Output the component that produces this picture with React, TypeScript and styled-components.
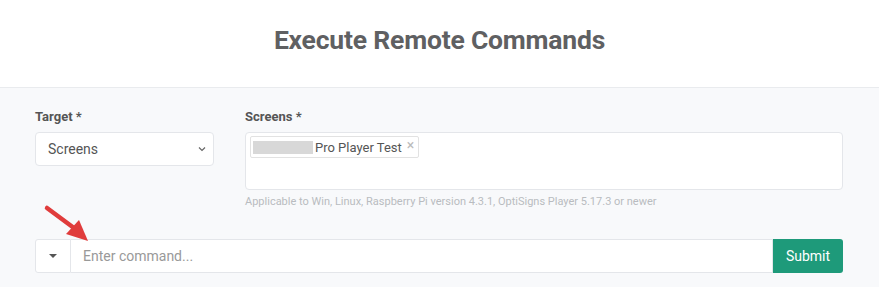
import React from "react";
import styled, { createGlobalStyle } from "styled-components";

const GlobalStyle = createGlobalStyle`
  html, body {
    margin: 0;
    padding: 0;
    background: #f8f9fb;
    font-family: Roboto, "Liberation Sans", Arial, sans-serif;
    overflow: hidden;
  }
  * { box-sizing: border-box; }
`;

const Header = styled.header`
  height: 88px;
  background: #fff;
  border-bottom: 1px solid #e9ebee;
  display: flex;
  align-items: center;
  justify-content: center;
`;

const Title = styled.h1`
  margin: 0 0 8px 0;
  font-size: 26.5px;
  font-weight: 700;
  color: #5f6062;
  letter-spacing: -0.2px;
`;

const Body = styled.main`
  padding: 21px 36px 0 35px;
  position: relative;
`;

const Row = styled.div`
  display: flex;
  gap: 31px;
`;

const Field = styled.div<{ $width?: number }>`
  display: flex;
  flex-direction: column;
  width: ${(p) => (p.$width ? `${p.$width}px` : "auto")};
  flex: ${(p) => (p.$width ? "none" : "1")};
`;

const Label = styled.label`
  font-size: 13px;
  font-weight: 700;
  color: #555;
  margin-bottom: 7px;
  line-height: 16px;
`;

const SelectBox = styled.div`
  height: 34px;
  background: #fff;
  border: 1px solid #e4e6ea;
  border-radius: 4px;
  display: flex;
  align-items: center;
  justify-content: space-between;
  padding: 0 6px 0 12px;
  font-size: 14px;
  color: #555;
`;

const MultiBox = styled.div`
  height: 58px;
  background: #fff;
  border: 1px solid #e4e6ea;
  border-radius: 4px;
  padding: 3px 4px;
`;

const Chip = styled.span`
  display: inline-flex;
  align-items: center;
  height: 22px;
  border: 1px solid #e2e2e2;
  border-radius: 2px;
  padding: 0 4px 0 2px;
  font-size: 13px;
  color: #555;
  background: #fff;
`;

const Redacted = styled.span`
  display: inline-block;
  width: 60px;
  height: 13px;
  background: #d8d8d8;
  margin-right: 2px;
`;

const ChipClose = styled.span`
  color: #bbb;
  font-size: 14px;
  margin-left: 5px;
  line-height: 1;
  margin-top: -4px;
`;

const Help = styled.div`
  margin-top: 5px;
  font-size: 11px;
  color: #b9bcc0;
`;

const CommandRow = styled.div`
  margin-top: 31px;
  display: flex;
  height: 34px;
`;

const DropButton = styled.button`
  width: 36px;
  background: #fff;
  border: 1px solid #e4e6ea;
  border-radius: 3px 0 0 3px;
  display: flex;
  align-items: center;
  justify-content: center;
  padding: 0;
`;

const Caret = styled.span`
  width: 0;
  height: 0;
  border-left: 4px solid transparent;
  border-right: 4px solid transparent;
  border-top: 4px solid #555;
`;

const CommandInput = styled.input`
  flex: 1;
  border: 1px solid #e4e6ea;
  border-left: none;
  background: #fff;
  padding: 0 12px;
  font-size: 14px;
  font-family: inherit;
  color: #555;
  outline: none;
  &::placeholder { color: #999; }
`;

const SubmitButton = styled.button`
  width: 70px;
  background: #1e9a7a;
  color: #fff;
  border: none;
  border-radius: 0 3px 3px 0;
  font-family: inherit;
  font-size: 14px;
`;

// red annotation arrow drawn over the form
const Arrow = styled.svg`
  position: absolute;
  left: 42px;
  top: 116px;
  overflow: visible;
`;

export default function App() {
  return (
    <>
      <GlobalStyle />
      <Header>
        <Title>Execute Remote Commands</Title>
      </Header>
      <Body>
        <Row>
          <Field $width={179}>
            <Label>Target *</Label>
            <SelectBox>
              Screens
              <svg width="10" height="10" viewBox="0 0 10 10">
                <path d="M2 3.5 L5 6.5 L8 3.5" fill="none" stroke="#666" strokeWidth="1.2" />
              </svg>
            </SelectBox>
          </Field>
          <Field>
            <Label>Screens *</Label>
            <MultiBox>
              <Chip>
                <Redacted />
                Pro Player Test
                <ChipClose>×</ChipClose>
              </Chip>
            </MultiBox>
            <Help>Applicable to Win, Linux, Raspberry Pi version 4.3.1, OptiSigns Player 5.17.3 or newer</Help>
          </Field>
        </Row>
        <CommandRow>
          <DropButton>
            <Caret />
          </DropButton>
          <CommandInput placeholder="Enter command..." />
          <SubmitButton>Submit</SubmitButton>
        </CommandRow>
        <Arrow width="50" height="40" viewBox="0 0 50 40">
          <line x1="5" y1="4" x2="32" y2="24" stroke="#e03c3c" strokeWidth="4.5" strokeLinecap="round" />
          <polygon points="46,37 24,30 37,16" fill="#e03c3c" />
        </Arrow>
      </Body>
    </>
  );
}
